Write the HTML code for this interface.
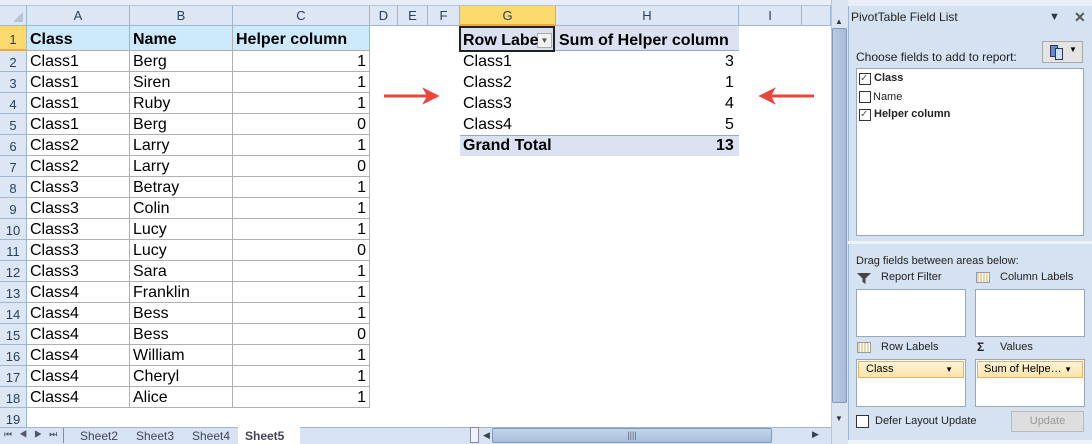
<!DOCTYPE html>
<html><head><style>
*{box-sizing:border-box;margin:0;padding:0}
body{width:1092px;height:444px;overflow:hidden;background:#fff;font-family:"Liberation Sans",sans-serif;position:relative}
.a{position:absolute}
.ch{position:absolute;top:6px;height:20px;background:#dce6f4;border-right:1px solid #9eb6ce;border-bottom:1px solid #9eb6ce;font-size:13px;color:#27415f;text-align:center;line-height:19px}
.rh{position:absolute;left:0;width:27px;height:21px;background:#dce6f4;border-right:1px solid #9eb6ce;border-bottom:1px solid #9eb6ce;font-size:13px;color:#27415f;text-align:center;line-height:22px}
.c{position:absolute;height:21px;border-right:1px solid #b0b0b0;border-bottom:1px solid #b0b0b0;font-size:16px;line-height:21px;padding:0 3px;white-space:nowrap;overflow:hidden}
.p{position:absolute;font-size:16px;line-height:21px;white-space:nowrap}
.s{font-size:12px;color:#222;position:absolute;white-space:nowrap}
.box{position:absolute;background:#fff;border:1px solid #9aa7b8}
</style></head><body>
<div class="a" style="left:0;top:0;width:848px;height:6px;background:#e7eef8;border-bottom:1px solid #b5c6dc"></div>
<div class="ch" style="left:0;width:27px;background:#dce6f4"><div style="position:absolute;right:3px;bottom:3px;width:0;height:0;border-left:10px solid transparent;border-bottom:10px solid #b6c3d4"></div></div>
<div class="ch" style="left:27px;width:103px">A</div>
<div class="ch" style="left:130px;width:103px">B</div>
<div class="ch" style="left:233px;width:137px">C</div>
<div class="ch" style="left:370px;width:28px">D</div>
<div class="ch" style="left:398px;width:30px">E</div>
<div class="ch" style="left:428px;width:32px">F</div>
<div class="ch" style="left:460px;width:96px;background:#fcd96c;border-bottom:2px solid #f2a93b">G</div>
<div class="ch" style="left:556px;width:183px">H</div>
<div class="ch" style="left:739px;width:63px">I</div>
<div class="ch" style="left:802px;width:29px"></div>
<div id="rows"></div>
<div class="a" style="left:460px;top:26px;width:279px;height:25px;background:#dbe1f1;border-bottom:1px solid #95a9d0"></div>
<div class="a" style="left:460px;top:135px;width:279px;height:21px;background:#dbe1f1;border-top:1px solid #95a9d0"></div>
<div class="a" style="left:459px;top:26px;width:96px;height:26px;border:2px solid #222"></div>
<div class="a" style="left:537px;top:33px;width:15px;height:15px;background:#f2f2f2;border:1px solid #aaa;font-size:8px;text-align:center;line-height:13px;color:#555">▼</div>
<div class="p" style="left:463px;top:30px;font-weight:bold">Row Labe</div>
<div class="p" style="left:559px;top:30px;font-weight:bold">Sum of Helper column</div>
<div class="p" style="left:463px;top:51px">Class1</div><div class="p" style="left:725px;top:51px">3</div>
<div class="p" style="left:463px;top:72px">Class2</div><div class="p" style="left:725px;top:72px">1</div>
<div class="p" style="left:463px;top:93px">Class3</div><div class="p" style="left:725px;top:93px">4</div>
<div class="p" style="left:463px;top:114px">Class4</div><div class="p" style="left:725px;top:114px">5</div>
<div class="p" style="left:463px;top:135px;font-weight:bold">Grand Total</div><div class="p" style="left:716px;top:135px;font-weight:bold">13</div>
<svg class="a" style="left:382px;top:86px" width="58" height="20"><path d="M2 10H46" stroke="#e8483c" stroke-width="3"/><path d="M42 3L56 10L42 17L46 10Z" fill="#e8483c" stroke="#e8483c" stroke-width="1.5"/></svg>
<svg class="a" style="left:758px;top:86px" width="58" height="20"><path d="M12 10H56" stroke="#e8483c" stroke-width="3"/><path d="M16 3L2 10L16 17L12 10Z" fill="#e8483c" stroke="#e8483c" stroke-width="1.5"/></svg>
<!-- vertical scrollbar -->
<div class="a" style="left:831px;top:0;width:17px;height:444px;background:#dbe5f2;border-left:1px solid #b5c6dc"></div>
<div class="a" style="left:832px;top:28px;width:15px;height:375px;background:linear-gradient(90deg,#b9cbe3,#a7bcd8);border:1px solid #7f98bb;border-radius:2px"></div>
<div class="a" style="left:835px;top:17px;font-size:8px;color:#334">▲</div>
<div class="a" style="left:835px;top:414px;font-size:8px;color:#334">▼</div>
<!-- bottom bar -->
<div class="a" style="left:0;top:427px;width:831px;height:17px;background:#d7e3f2;border-top:1px solid #9eb6ce"></div>
<div class="a" style="left:4px;top:429px;font-size:9px;color:#556;letter-spacing:7px">⏮◀▶⏭</div>
<div class="a" style="left:63px;top:428px;width:1px;height:15px;background:#889"></div>
<div class="s" style="left:80px;top:429px;color:#445">Sheet2</div>
<div class="s" style="left:136px;top:429px;color:#445">Sheet3</div>
<div class="s" style="left:192px;top:429px;color:#445">Sheet4</div>
<div class="a" style="left:238px;top:427px;width:62px;height:17px;background:#fff"></div>
<div class="s" style="left:245px;top:429px;font-weight:bold;color:#445">Sheet5</div>
<div class="a" style="left:470px;top:427px;width:9px;height:16px;background:#eef3fa;border:1px solid #889"></div>
<div class="a" style="left:480px;top:428px;width:50px;height:15px;color:#345;font-size:9px;line-height:15px;padding-left:3px">◀</div>
<div class="a" style="left:492px;top:428px;width:280px;height:15px;background:linear-gradient(#c3d4ea,#a9bfdc);border:1px solid #7f98bb;border-radius:2px;text-align:center;font-size:9px;color:#667;line-height:13px">||||</div>
<div class="a" style="left:812px;top:429px;color:#345;font-size:9px">▶</div>
<!-- panel -->
<div class="a" style="left:848px;top:0;width:244px;height:444px;background:#d5e2f2;border-left:1px solid #9eb6ce"></div>
<div class="a" style="left:848px;top:0;width:244px;height:6px;background:#e7eef8"></div>
<div class="a" style="left:851px;top:10px;font-size:12px;color:#222">PivotTable Field List</div>
<div class="a" style="left:1049px;top:11px;font-size:11px;color:#334">▼</div>
<div class="a" style="left:1074px;top:9px;font-size:14px;color:#555;font-weight:bold">✕</div>
<div class="s" style="left:856px;top:50px">Choose fields to add to report:</div>
<div class="a" style="left:1042px;top:41px;width:41px;height:22px;background:#e4e4e4;border:1px solid #aaa"></div>
<div class="a" style="left:1050px;top:45px;width:8px;height:12px;background:#5b8fd0;border:1px solid #335"></div>
<div class="a" style="left:1055px;top:48px;width:8px;height:12px;background:#cfe0f5;border:1px solid #335"></div>
<div class="a" style="left:1069px;top:45px;font-size:8px">▼</div>
<div class="box" style="left:856px;top:68px;width:228px;height:168px"></div>
<div class="a" style="left:859px;top:73px;width:12px;height:12px;border:1px solid #333;background:#fff;font-size:10px;line-height:10px;color:#555">✓</div>
<div class="s" style="left:874px;top:72px;font-weight:bold;font-size:11px">Class</div>
<div class="a" style="left:859px;top:91px;width:12px;height:12px;border:1px solid #333;background:#fff"></div>
<div class="s" style="left:873px;top:91px;font-size:11px">Name</div>
<div class="a" style="left:859px;top:109px;width:12px;height:12px;border:1px solid #333;background:#fff;font-size:10px;line-height:10px;color:#555">✓</div>
<div class="s" style="left:874px;top:108px;font-weight:bold;font-size:11px">Helper column</div>
<div class="a" style="left:848px;top:241px;width:244px;height:3px;background:#eef3fa"></div>
<div class="s" style="left:856px;top:255px;font-size:11px">Drag fields between areas below:</div>
<svg class="a" style="left:856px;top:272px" width="16" height="13"><path d="M1 1H15L9.5 6.5V12L6.5 10V6.5Z" fill="#444"/></svg>
<div class="s" style="left:881px;top:271px;font-size:11px">Report Filter</div>
<div class="a" style="left:976px;top:272px;width:14px;height:11px;border:1px solid #99a;background:repeating-linear-gradient(90deg,#e8d8a8 0 2px,#fff 2px 3px)"></div>
<div class="s" style="left:1000px;top:271px;font-size:11px">Column Labels</div>
<div class="box" style="left:856px;top:289px;width:110px;height:48px"></div>
<div class="box" style="left:975px;top:289px;width:110px;height:48px"></div>
<div class="a" style="left:857px;top:342px;width:14px;height:11px;border:1px solid #99a;background:repeating-linear-gradient(90deg,#e8d8a8 0 2px,#fff 2px 3px)"></div>
<div class="s" style="left:881px;top:341px;font-size:11px">Row Labels</div>
<div class="s" style="left:977px;top:340px;font-weight:bold">Σ</div>
<div class="s" style="left:1000px;top:341px;font-size:11px">Values</div>
<div class="box" style="left:856px;top:359px;width:110px;height:48px"></div>
<div class="box" style="left:975px;top:359px;width:110px;height:48px"></div>
<div class="a" style="left:858px;top:361px;width:106px;height:17px;background:linear-gradient(#fff3d8,#fde3a8);border:1px solid #e5b462;font-size:11px;line-height:15px;padding-left:7px">Class<span style="position:absolute;right:10px;font-size:8px">▼</span></div>
<div class="a" style="left:977px;top:361px;width:106px;height:17px;background:linear-gradient(#fff3d8,#fde3a8);border:1px solid #e5b462;font-size:11px;line-height:15px;padding-left:6px">Sum of Helpe…<span style="position:absolute;right:10px;font-size:8px">▼</span></div>
<div class="a" style="left:856px;top:415px;width:13px;height:13px;background:#fff;border:1px solid #333"></div>
<div class="s" style="left:875px;top:415px;font-size:11px">Defer Layout Update</div>
<div class="a" style="left:1011px;top:411px;width:73px;height:21px;background:#dedede;border:1px solid #bbb;font-size:11px;color:#999;text-align:center;line-height:19px">Update</div>
<div class="a" style="left:848px;top:440px;width:244px;height:4px;background:#eef3fa"></div>
<script>
var d=[["Class","Name","Helper column"],["Class1","Berg",1],["Class1","Siren",1],["Class1","Ruby",1],["Class1","Berg",0],["Class2","Larry",1],["Class2","Larry",0],["Class3","Betray",1],["Class3","Colin",1],["Class3","Lucy",1],["Class3","Lucy",0],["Class3","Sara",1],["Class4","Franklin",1],["Class4","Bess",1],["Class4","Bess",0],["Class4","William",1],["Class4","Cheryl",1],["Class4","Alice",1]];
var h="";
for(var i=0;i<19;i++){
var t=i==0?26:30+i*21,ht=i==0?25:21;
var bg=i==0?"background:#fcd96c;border-bottom:2px solid #f2a93b;":"";
h+='<div class="rh" style="top:'+t+'px;height:'+ht+'px;line-height:'+(ht+2)+'px;'+bg+'">'+(i+1)+'</div>';
if(i<18){var r=d[i],hd=i==0,st=hd?'font-weight:bold;background:#cdeafc;line-height:27px;':'';
h+='<div class="c" style="left:27px;width:103px;top:'+t+'px;height:'+ht+'px;'+st+'">'+r[0]+'</div>';
h+='<div class="c" style="left:130px;width:103px;top:'+t+'px;height:'+ht+'px;'+st+'">'+r[1]+'</div>';
h+='<div class="c" style="left:233px;width:137px;top:'+t+'px;height:'+ht+'px;'+st+(hd?'':'text-align:right;')+'">'+r[2]+'</div>';}
}
document.getElementById("rows").innerHTML=h;
</script>
</body></html>
